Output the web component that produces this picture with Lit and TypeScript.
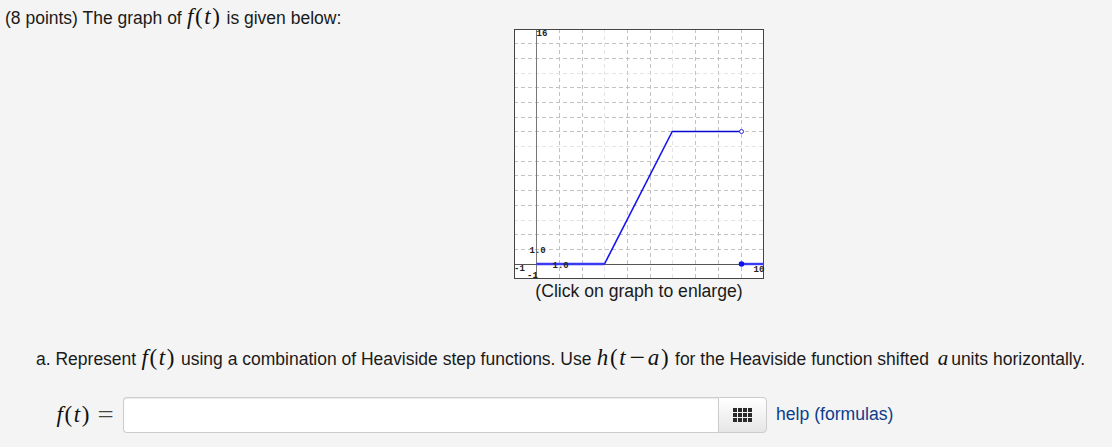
import { LitElement, html, css, svg } from "lit";
import { customElement } from "lit/decorators.js";

const xs = [559.5, 582.5, 604.5, 627.5, 650.5, 672.5, 695.5, 718.5, 741.5];
const ys = [43.5, 58.5, 73.5, 87.5, 102.5, 117.5, 131.5, 146.5, 161.5, 175.5, 190.5, 205.5, 220.5, 234.5, 249.5];
const faint = new Set([604.5, 672.5, 73.5, 146.5, 220.5]);

@customElement("app-root")
export class AppRoot extends LitElement {
  static styles = css`
    :host { display: block; width: 1112px; height: 447px; background: #f4f4f4; overflow: hidden;
      font-family: "Liberation Sans", Arial, sans-serif; font-size: 17.6px; color: #1a1a1a; }
    .page { display: flex; flex-direction: column; }
    .intro { margin: 5px 0 0 5px; line-height: 24px; white-space: nowrap; font-size: 17.5px; }
    .m { font-family: "Liberation Serif", serif; font-size: 23px; font-style: italic; color: #111;
      margin-left: 0.5px; letter-spacing: 1.6px; }
    .m .r { font-style: normal; }
    .m .op { font-style: normal; margin: 0 2px 0 4px; display: inline-block; transform: scaleX(1.2); }
    .m.a { margin: 0 -2px 0 4px; font-size: 21px; letter-spacing: 0; }
    .figure { display: flex; flex-direction: column; align-items: center; margin: -2px 0 0 166px; }
    .figure svg { display: block; }
    .caption { margin-top: -1px; line-height: 24px; }
    .part { margin: 43px 0 0 36px; line-height: 24px; white-space: nowrap; font-size: 17.5px; }
    .answer { display: flex; align-items: center; margin: 26px 0 0 56px; }
    .lhs { width: 67px; white-space: nowrap; }
    .eq { font-style: normal; font-family: "Liberation Serif", serif; font-size: 23px; color: #444;
      display: inline-block; transform: scaleX(1.25); margin-left: 8px; }
    .group { display: flex; width: 644px; height: 36px; }
    .field { flex: 1; background: #fff; border: 1px solid #ccc; border-right: 0; border-radius: 4px 0 0 4px;
      box-shadow: inset 0 1px 1px rgba(0,0,0,.08); }
    .btn { width: 49px; box-sizing: border-box; display: flex; align-items: center; justify-content: center;
      border: 1px solid #ccc; border-radius: 0 4px 4px 0; background: linear-gradient(#fff, #e6e6e6); }
    .btn svg { display: block; }
    .help { margin-left: 9px; padding-bottom: 2px; color: #0b3d8c; }
  `;

  private graph() {
    return html`<svg width="252" height="252" viewBox="513 28 252 252">
      <rect x="514.5" y="29.5" width="249" height="249" fill="#fff"/>
      ${xs.map((x) => svg`<line x1=${x} x2=${x} y1="29" y2="278" stroke=${faint.has(x) ? "#e4e4e4" : "#c2c2c2"} stroke-dasharray="4 3"/>`)}
      ${ys.map((y) => svg`<line x1="514" x2="763" y1=${y} y2=${y} stroke=${faint.has(y) ? "#e4e4e4" : "#c2c2c2"} stroke-dasharray="4 3"/>`)}
      <line x1="536.5" x2="536.5" y1="29" y2="278" stroke="#777"/>
      <line x1="514" x2="763" y1="264.5" y2="264.5" stroke="#555"/>
      <rect x="514.5" y="29.5" width="249" height="249" fill="none" stroke="#444"/>
      <path d="M604.5 264L672.5 131" fill="none" stroke="#1414f0" stroke-width="1.6"/>
      <path d="M536.5 264H604.5" fill="none" stroke="#3a3af5" stroke-width="2.4"/>
      <path d="M672.5 131.5H741.5" fill="none" stroke="#0808d0" stroke-width="1.5"/>
      <path d="M741.5 264H764" fill="none" stroke="#3a3af5" stroke-width="2.4"/>
      <circle cx="741.5" cy="264" r="2.8" fill="#1010e8"/>
      <circle cx="741.5" cy="131.5" r="2" fill="#fff" stroke="#2a2ae0"/>
      <g font-family="Liberation Mono, monospace" font-size="9" font-weight="700" fill="#222">
        <text x="536.5" y="36">16</text>
        <text x="529.5" y="253">1.0</text>
        <text x="552.5" y="268">1.0</text>
        <text x="514" y="271">-1</text>
        <text x="527" y="278">-1</text>
        <text x="753.5" y="272">10</text>
      </g>
    </svg>`;
  }

  render() {
    const ft = html`<span class="m">f<span class="r">(</span>t<span class="r">)</span></span>`;
    return html`<div class="page">
      <div class="intro">(8 points) The graph of ${ft} is given below:</div>
      <div class="figure">
        ${this.graph()}
        <div class="caption">(Click on graph to enlarge)</div>
      </div>
      <div class="part">a. Represent ${ft} using a combination of Heaviside step functions. Use <span class="m">h<span class="r">(</span>t<span class="op">&minus;</span>a<span class="r">)</span></span> for the Heaviside function shifted <span class="m a">a</span> units horizontally.</div>
      <div class="answer">
        <div class="lhs">${ft}<span class="eq">=</span></div>
        <div class="group">
          <div class="field"></div>
          <div class="btn"><svg width="19" height="14" viewBox="0 0 19 14" fill="#2a2a2a">
            ${[0, 5, 10].map((y) => [0, 5, 10, 15].map((x) => svg`<rect x=${x} y=${y} width="4" height="4"/>`))}
          </svg></div>
        </div>
        <span class="help">help (formulas)</span>
      </div>
    </div>`;
  }
}
